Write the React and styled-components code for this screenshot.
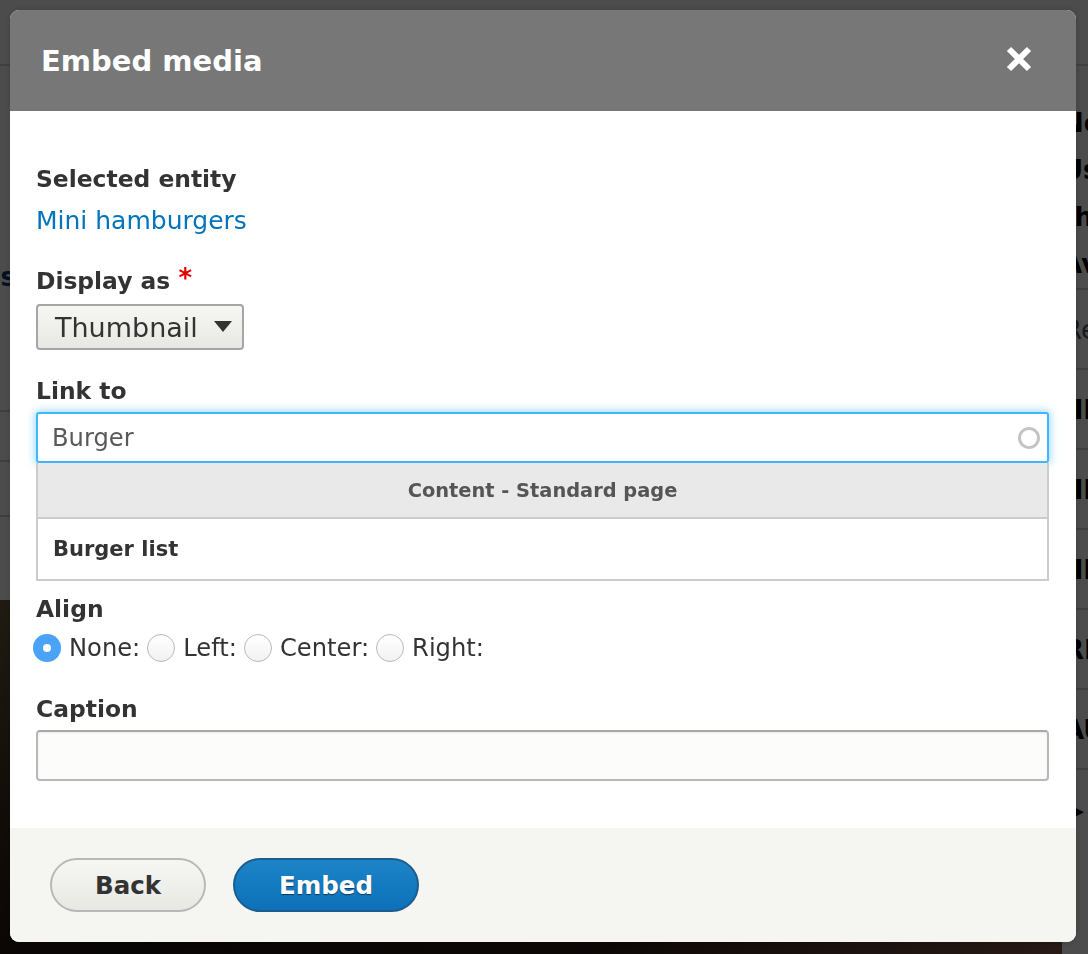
import React from 'react';
import styled, { createGlobalStyle } from 'styled-components';

const GlobalStyle = createGlobalStyle`
  html, body {
    margin: 0;
    padding: 0;
    height: 100%;
    background: #ffffff;
    font-family: "DejaVu Sans", "Lucida Grande", Verdana, sans-serif;
    color: #333333;
    overflow: hidden;
  }
  * {
    box-sizing: border-box;
  }
`;

function CloseIcon() {
  return (
    <svg width="26" height="26" viewBox="0 0 26 26" aria-hidden="true">
      <path d="M3 3 L23 23 M23 3 L3 23" stroke="#ffffff" strokeWidth="6" strokeLinecap="butt" />
    </svg>
  );
}

function Throbber() {
  return (
    <svg width="24" height="24" viewBox="0 0 24 24" aria-hidden="true">
      <circle cx="12" cy="12" r="9.5" fill="none" stroke="#c4c4c4" strokeWidth="3" />
    </svg>
  );
}

function Caret() {
  return (
    <svg width="18" height="12" viewBox="0 0 18 12" aria-hidden="true">
      <path d="M0 0 L18 0 L9 11 Z" fill="#333333" />
    </svg>
  );
}

const alignOptions = ['None', 'Left', 'Center', 'Right'];

const asideRows = [
  { text: 'Reference', light: true },
  { text: 'III' },
  { text: 'III' },
  { text: 'III' },
  { text: 'RELATED' },
  { text: 'AUTHOR' },
  { text: '▶ PREVIEW' },
];

function App() {
  return (
    <>
      <GlobalStyle />
      <Page>
        <PageTop />
        <PageBody>
          <PageMain>
            <SideLink>Tags</SideLink>
            <MainRule $h={50} />
            <MainRule $h={55} />
            <MainRule $h={85} />
            <HeroImage />
          </PageMain>
          <PageAside>
            <AsideText>Notes</AsideText>
            <AsideText>Usage</AsideText>
            <AsideText>the</AsideText>
            <AsideText>Av</AsideText>
            {asideRows.map((row, i) => (
              <AsideRow key={i} $light={row.light}>
                {row.text}
              </AsideRow>
            ))}
          </PageAside>
        </PageBody>
      </Page>
      <Overlay />

      <Dialog role="dialog" aria-labelledby="dialog-title">
        <TitleBar>
          <Title id="dialog-title">Embed media</Title>
          <CloseButton aria-label="Close">
            <CloseIcon />
          </CloseButton>
        </TitleBar>

        <Content>
          <Label>Selected entity</Label>
          <EntityLink href="#">Mini hamburgers</EntityLink>

          <Label $top={30}>
            Display as <Required>*</Required>
          </Label>
          <Select>
            <span>Thumbnail</span>
            <Caret />
          </Select>

          <Label $top={26} $bottom={6}>Link to</Label>
          <FocusedShell>
            <BareInput defaultValue="Burger" />
            <Throbber />
          </FocusedShell>
          <Autocomplete>
            <GroupHeader>Content - Standard page</GroupHeader>
            <Suggestion>Burger list</Suggestion>
          </Autocomplete>

          <Label $top={13}>Align</Label>
          <RadioRow>
            {alignOptions.map((opt, i) => (
              <RadioItem key={opt}>
                <Radio $checked={i === 0} />
                <RadioLabel>{opt}:</RadioLabel>
              </RadioItem>
            ))}
          </RadioRow>

          <Label $top={31} $bottom={6}>Caption</Label>
          <TextField />
        </Content>

        <Footer>
          <Button>Back</Button>
          <Button $primary>Embed</Button>
        </Footer>
      </Dialog>
    </>
  );
}

/* background page seen through the overlay */

const Page = styled.div`
  height: 100vh;
  display: flex;
  flex-direction: column;
  background: #ffffff;
  overflow: hidden;
`;

const PageTop = styled.div`
  height: 66px;
  flex: none;
  border-bottom: 2px solid #d6d6d6;
`;

const PageBody = styled.div`
  flex: 1;
  display: flex;
  min-height: 0;
`;

const PageMain = styled.div`
  width: 1062px;
  flex: none;
  display: flex;
  flex-direction: column;
  padding-top: 181px;
`;

const SideLink = styled.div`
  font-weight: bold;
  font-size: 26px;
  line-height: 60px;
  height: 163px;
  color: #0a3d6e;
  margin-left: -50px;
  white-space: nowrap;
`;

const MainRule = styled.div`
  height: ${(p) => p.$h}px;
  flex: none;
  border-top: 2px solid #cfcfcf;
`;

const HeroImage = styled.div`
  flex: 1;
  background: linear-gradient(165deg, #6c5a3e 0%, #3a2a1a 35%, #1c1410 60%, #2a1a14 80%, #8a5a4a 100%);
`;

const PageAside = styled.div`
  flex: 1;
  min-width: 0;
  display: flex;
  flex-direction: column;
  padding-top: 34px;
  font-weight: bold;
  font-size: 26px;
  color: #000000;
  white-space: nowrap;
  overflow: hidden;
`;

const AsideText = styled.div`
  height: 47px;
  line-height: 47px;
`;

const AsideRow = styled.div`
  height: 80px;
  flex: none;
  line-height: 80px;
  padding-left: 2px;
  border-top: 2px solid #cfcfcf;
  color: ${(p) => (p.$light ? '#555555' : '#000000')};
  font-weight: ${(p) => (p.$light ? 'normal' : 'bold')};
`;

const Overlay = styled.div`
  position: fixed;
  inset: 0;
  background: rgba(0, 0, 0, 0.7);
`;

/* dialog */

const Dialog = styled.div`
  position: fixed;
  top: 10px;
  left: 10px;
  width: 1066px;
  height: 932px;
  display: flex;
  flex-direction: column;
  border-radius: 9px;
  overflow: hidden;
  background: #ffffff;
  box-shadow: 0 0 6px rgba(0, 0, 0, 0.2);
`;

const TitleBar = styled.div`
  height: 101px;
  flex: none;
  display: flex;
  align-items: center;
  justify-content: space-between;
  padding: 0 44px 0 31px;
  background: #777777;
`;

const Title = styled.h1`
  margin: 0;
  font-size: 29px;
  font-weight: bold;
  color: #ffffff;
`;

const CloseButton = styled.button`
  border: 0;
  background: none;
  padding: 0;
  display: flex;
  cursor: pointer;
  margin-top: -4px;
`;

const Content = styled.div`
  flex: 1;
  display: flex;
  flex-direction: column;
  align-items: flex-start;
  padding: 53px 27px 0 26px;
`;

const Label = styled.div`
  font-size: 23.4px;
  font-weight: bold;
  line-height: 30px;
  color: #333333;
  margin-top: ${(p) => p.$top || 0}px;
  margin-bottom: ${(p) => (p.$bottom === undefined ? 8 : p.$bottom)}px;
`;

const Required = styled.span`
  color: #e00000;
  font-size: 26px;
  vertical-align: top;
  position: relative;
  top: -3px;
`;

const EntityLink = styled.a`
  font-size: 25px;
  line-height: 30px;
  color: #0074bd;
  text-decoration: none;
  margin-top: 4px;
`;

const Select = styled.div`
  height: 46px;
  display: flex;
  align-items: center;
  gap: 16px;
  padding: 0 10px 0 17px;
  font-size: 27px;
  color: #333333;
  border: 2px solid #a6a6a6;
  border-radius: 4px;
  background: linear-gradient(#f6f6f3, #e8e8e3);
`;

const FocusedShell = styled.div`
  width: 100%;
  height: 51px;
  flex: none;
  display: flex;
  align-items: center;
  padding: 0 6px 0 14px;
  border: 2px solid #40b6ff;
  border-radius: 3px;
  background: #ffffff;
  box-shadow: 0 0 8px 1px rgba(64, 182, 255, 0.55);
`;

const BareInput = styled.input`
  flex: 1;
  border: 0;
  outline: 0;
  padding: 0;
  background: transparent;
  font-family: inherit;
  font-size: 24.2px;
  color: #595959;
`;

const Autocomplete = styled.div`
  width: 100%;
  border: 2px solid #cccccc;
  border-top: 0;
  display: flex;
  flex-direction: column;
`;

const GroupHeader = styled.div`
  height: 56px;
  display: flex;
  align-items: center;
  justify-content: center;
  background: #e9e9e9;
  border-bottom: 2px solid #cccccc;
  font-size: 19.4px;
  font-weight: bold;
  color: #555555;
`;

const Suggestion = styled.div`
  height: 60px;
  display: flex;
  align-items: center;
  padding-left: 15px;
  font-size: 21px;
  font-weight: bold;
  color: #333333;
  background: #ffffff;
`;

const RadioRow = styled.div`
  display: flex;
  align-items: center;
  height: 30px;
  margin-top: 1px;
  margin-left: -3px;
`;

const RadioItem = styled.label`
  display: flex;
  align-items: center;
  margin-right: 7px;
`;

const Radio = styled.span`
  width: 28px;
  height: 28px;
  border-radius: 50%;
  display: flex;
  align-items: center;
  justify-content: center;
  margin-right: 8px;
  border: ${(p) => (p.$checked ? '0' : '1.5px solid #b8b8b8')};
  background: ${(p) => (p.$checked ? '#4aa3f6' : 'linear-gradient(#ffffff, #f2f2f2)')};

  &::after {
    content: '';
    display: ${(p) => (p.$checked ? 'block' : 'none')};
    width: 8px;
    height: 8px;
    border-radius: 50%;
    background: #ffffff;
  }
`;

const RadioLabel = styled.span`
  font-size: 24.2px;
  color: #333333;
`;

const TextField = styled.input`
  width: 100%;
  height: 51px;
  flex: none;
  border: 2px solid #b8b8b8;
  border-top-color: #a8a8a8;
  border-radius: 4px;
  background: #fcfcfa;
  box-shadow: inset 0 1px 2px rgba(0, 0, 0, 0.08);
  outline: 0;
`;

const Footer = styled.div`
  height: 114px;
  flex: none;
  display: flex;
  align-items: center;
  gap: 27px;
  padding: 0 40px;
  background: #f5f5f2;
`;

const Button = styled.button`
  height: 54px;
  padding: 0 ${(p) => (p.$primary ? '44px' : '43px')};
  border-radius: 27px;
  font-family: inherit;
  font-size: 24.5px;
  font-weight: bold;
  cursor: pointer;
  color: ${(p) => (p.$primary ? '#ffffff' : '#333333')};
  border: 2px solid ${(p) => (p.$primary ? '#1e5c90' : '#b8b8b8')};
  background: ${(p) =>
    p.$primary ? 'linear-gradient(#1d84c8, #0c71b8)' : 'linear-gradient(#f6f6f3, #e8e8e3)'};
  text-shadow: ${(p) => (p.$primary ? '0 1px 1px rgba(0, 0, 0, 0.5)' : 'none')};
`;

export default App;
